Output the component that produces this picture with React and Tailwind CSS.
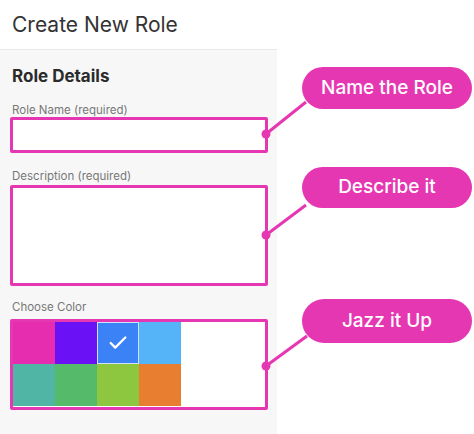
import { Check } from 'lucide-react'

const SWATCHES = [
  { color: 'bg-[#e62db0]' },
  { color: 'bg-[#6a12f5]' },
  { color: 'bg-[#3b82f6]', selected: true },
  { color: 'bg-[#55b3f8]' },
  { color: 'bg-[#50b5a5]' },
  { color: 'bg-[#55bb6b]' },
  { color: 'bg-[#8dc63f]' },
  { color: 'bg-[#e87e30]' },
]

const CALLOUTS = [
  { x1: 266, y1: 134, x2: 306, y2: 102 },
  { x1: 266, y1: 235, x2: 306, y2: 205 },
  { x1: 266, y1: 366, x2: 307, y2: 336 },
]

function Pill({ children, className = '' }) {
  return (
    <div className={`w-[170px] rounded-full bg-[#e637b3] text-white text-[19px] font-medium flex items-center justify-center ${className}`}>
      {children}
    </div>
  )
}

export default function App() {
  return (
    <div className="relative w-[474px] h-[434px] bg-white overflow-hidden font-['Inter',sans-serif]">
      <div className="flex h-full">

        {/* Form panel */}
        <div className="w-[277px] flex flex-col">
          <header className="h-[50px] shrink-0 px-3 flex items-center text-[21px] text-[#333] border-b border-[#e9e9e9]">
            Create New Role
          </header>

          <div className="flex-1 bg-[#f7f7f7] px-[10px] pt-[15px]">
            <h2 className="ml-[2px] text-[17px] leading-[22px] font-bold text-[#2b2b2b]">Role Details</h2>

            <p className="ml-[2px] mt-[16px] text-[11.5px] leading-[14px] text-[#777]">Role Name (required)</p>
            <div className="w-[258px] h-[36px] bg-white border-[3px] border-[#e637b3] rounded-[2px]" />

            <p className="ml-[2px] mt-[16px] text-[11.5px] leading-[14px] text-[#777]">Description (required)</p>
            <div className="mt-[2px] w-[258px] h-[101px] bg-white border-[3px] border-[#e637b3] rounded-[2px]" />

            <p className="ml-[2px] mt-[14px] text-[11.5px] leading-[14px] text-[#777]">Choose Color</p>
            <div className="mt-[5px] w-[258px] h-[91px] bg-white border-[3px] border-[#e637b3] rounded-[2px]">
              <div className="grid grid-cols-4 w-[168px]">
                {SWATCHES.map((s, i) => (
                  <div
                    key={i}
                    className={`h-[42px] flex items-center justify-center ${s.color} ${s.selected ? 'border border-[#cfe2fb]' : ''}`}
                  >
                    {s.selected && <Check size={22} strokeWidth={2.5} className="text-white" />}
                  </div>
                ))}
              </div>
            </div>
          </div>
        </div>

        {/* Annotations */}
        <div className="flex-1 pl-[25px] pt-[67px]">
          <Pill className="h-[42px]">Name the Role</Pill>
          <Pill className="h-[41px] mt-[58px]">Describe it</Pill>
          <Pill className="h-[44px] mt-[91px]">Jazz it Up</Pill>
        </div>
      </div>

      {/* connector lines */}
      <svg className="absolute inset-0 pointer-events-none" width="474" height="434">
        {CALLOUTS.map((c, i) => (
          <g key={i}>
            <line x1={c.x1} y1={c.y1} x2={c.x2} y2={c.y2} stroke="#e637b3" strokeWidth="3" />
            <circle cx={c.x1} cy={c.y1} r="4.5" fill="#e637b3" />
          </g>
        ))}
      </svg>
    </div>
  )
}
